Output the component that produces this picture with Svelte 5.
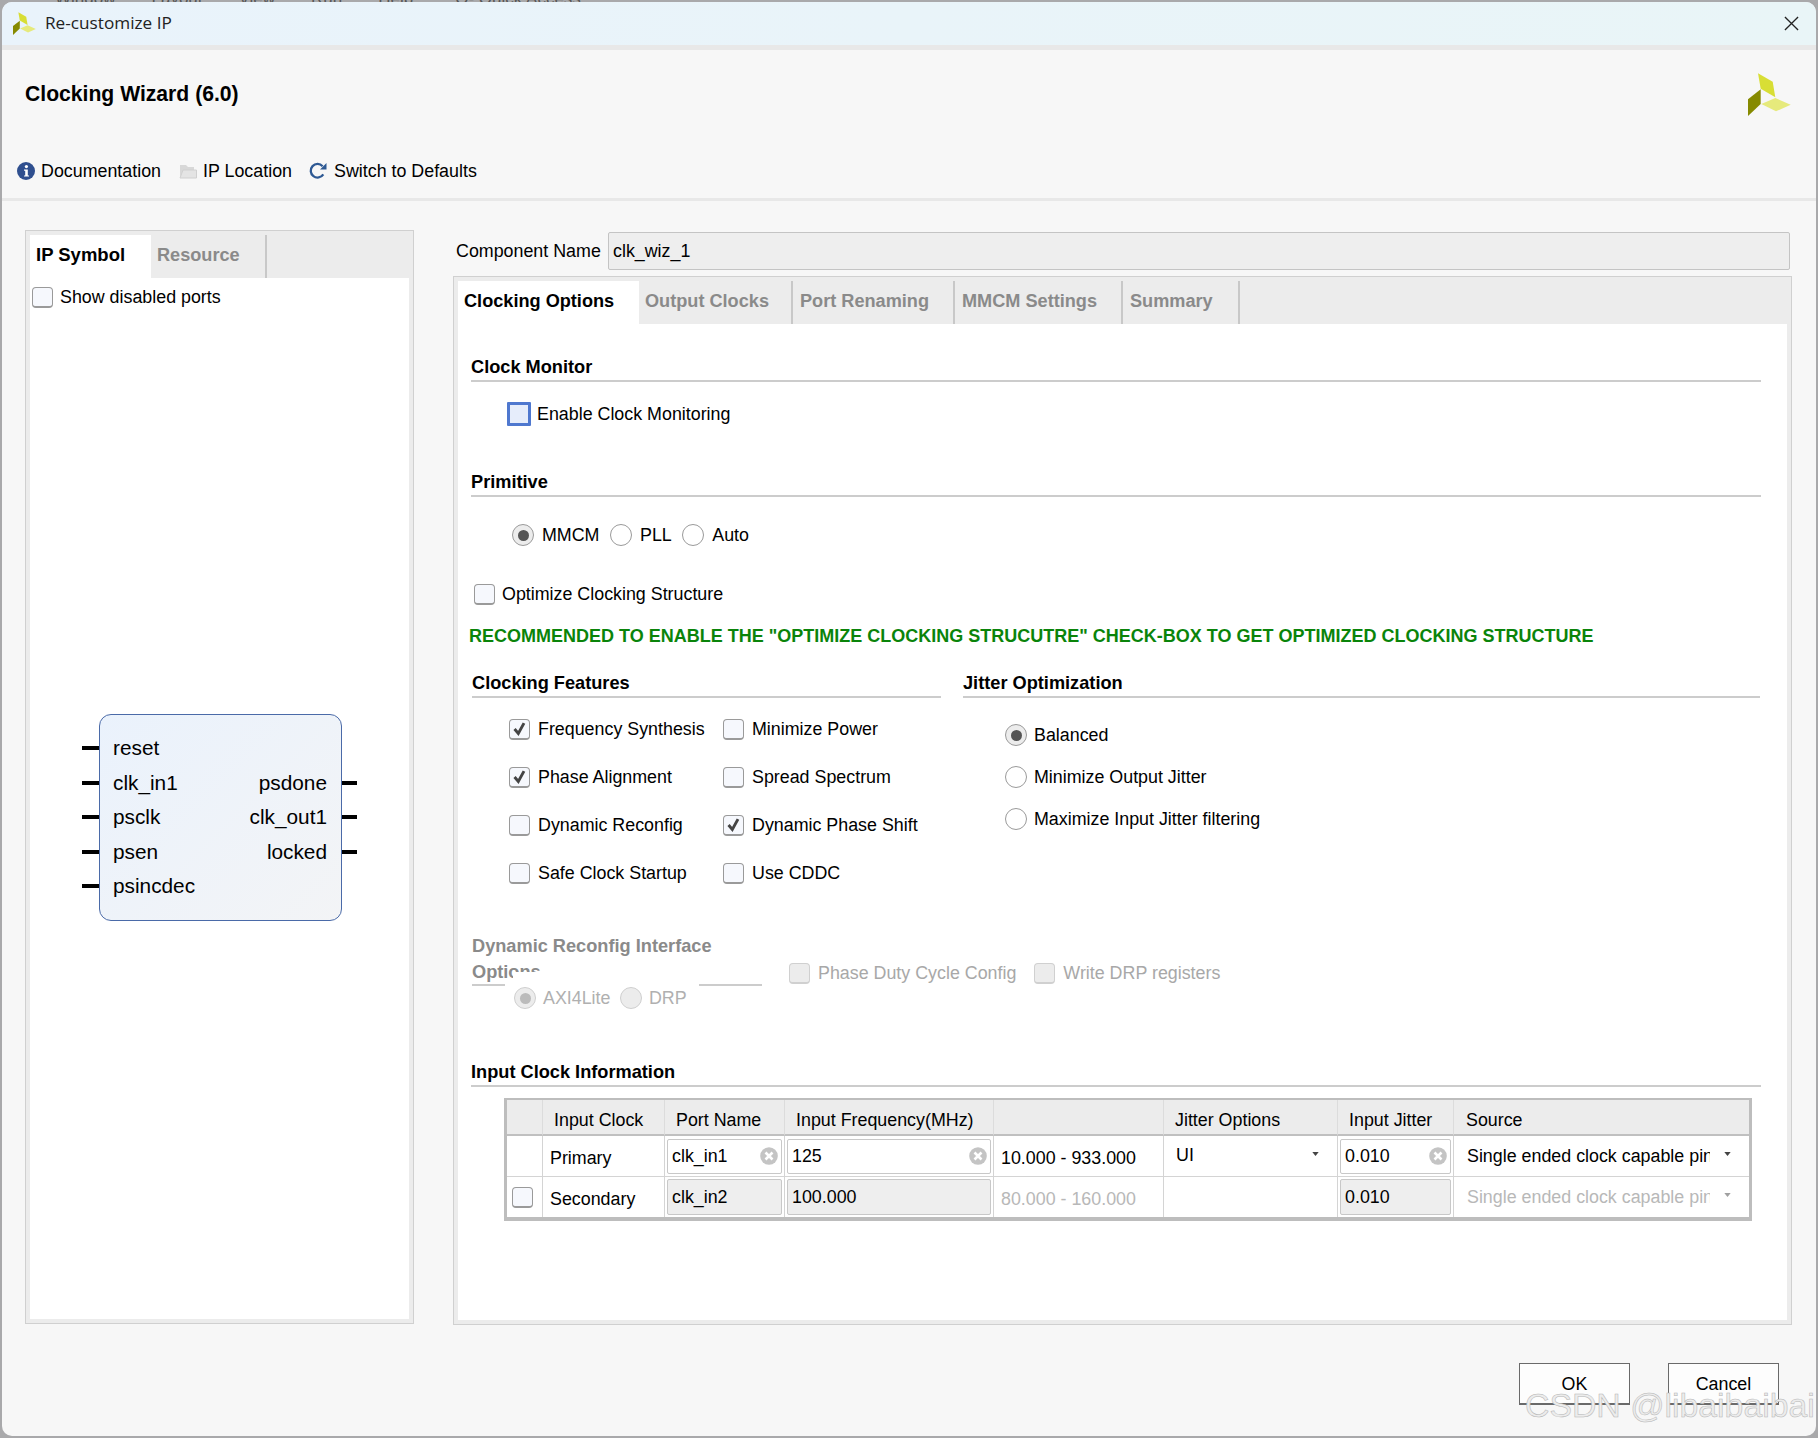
<script>
  const features = [
    ['Frequency Synthesis', true], ['Minimize Power', false],
    ['Phase Alignment', true], ['Spread Spectrum', false],
    ['Dynamic Reconfig', false], ['Dynamic Phase Shift', true],
    ['Safe Clock Startup', false], ['Use CDDC', false]
  ];
  const tabs = ['Output Clocks', 'Port Renaming', 'MMCM Settings', 'Summary'];
  const tabWidths = [154, 162, 168, 117];
  const pinsLeft = ['reset', 'clk_in1', 'psclk', 'psen', 'psincdec'];
  const pinsRight = ['', 'psdone', 'clk_out1', 'locked', ''];
</script>

{#snippet logo(cls)}
  <svg class={cls} viewBox="0 0 43 43">
    <polygon points="10,0.3 24.7,8.7 27.3,24.3 12.7,15.7" fill="#d8de35" />
    <polygon points="27.3,25 42.7,31.7 28,38.3 13.3,31" fill="#e6ea7c" />
    <polygon points="12.7,16.3 12.7,31 0,43 0,26.3" fill="#868a00" />
  </svg>
{/snippet}

{#snippet check(checked, cls = '')}
  <span class="box {cls}">
    {#if checked}
      <svg viewBox="0 0 20 20"><path d="M4.5 10 L8.7 15 L15 3.5" fill="none" stroke="#444" stroke-width="3.2" /></svg>
    {/if}
  </span>
{/snippet}

{#snippet radio(on, cls = '')}
  <span class="radio {on ? 'on' : ''} {cls}"></span>
{/snippet}

{#snippet clear()}
  <svg class="clear" viewBox="0 0 18 18">
    <circle cx="9" cy="9" r="8.8" fill="#c4c4c4" />
    <path d="M5.5 5.5 L12.5 12.5 M12.5 5.5 L5.5 12.5" stroke="#fff" stroke-width="2.6" />
  </svg>
{/snippet}

{#snippet arrow(cls = '')}
  <svg class="arrow {cls}" viewBox="0 0 8 5"><path d="M0 0 H8 L4 5 Z" /></svg>
{/snippet}

<div class="screen">
  <div class="menu-peek">
    <span>Window</span><span>Layout</span><span>View</span><span>Run</span><span>Help</span><span class="qa">Q- Quick Access</span>
  </div>
  <div class="dialog">
    <div class="titlebar">
      {@render logo('logo-small')}
      <span class="title">Re-customize IP</span>
      <svg class="close" viewBox="0 0 16 16"><path d="M1 1 L15 15 M15 1 L1 15" stroke="#222" stroke-width="1.4" fill="none" /></svg>
    </div>
    <div class="strip"></div>

    <div class="header">
      <h1>Clocking Wizard (6.0)</h1>
      {@render logo('logo-big')}
    </div>

    <div class="toolbar">
      <span class="tool">
        <svg class="ic" viewBox="0 0 18 18"><circle cx="9" cy="9" r="9" fill="#2f4f8f" /><circle cx="9.4" cy="4.6" r="1.6" fill="#fff" /><path d="M7 7.6 H10.8 V13.4 H12 V14.6 H7 V13.4 H8.2 V8.8 H7 Z" fill="#fff" /></svg>
        Documentation
      </span>
      <span class="tool t2">
        <svg class="ic" viewBox="0 0 18 18"><path d="M1 3 H7 L9 5 H15 V8 H5 L1 15 Z" fill="#d8d8d8" /><path d="M1 16 L4 8 H17.5 V16 Z" fill="#e4e4e4" stroke="#d0d0d0" /></svg>
        IP Location
      </span>
      <span class="tool t3">
        <svg class="ic" viewBox="0 0 18 18"><path d="M14.3 12.4 A6.8 6.8 0 1 1 13.6 4.2" fill="none" stroke="#2f5a94" stroke-width="2.3" /><path d="M17.5 1 V7.6 H11 Z" fill="#2f5a94" /></svg>
        Switch to Defaults
      </span>
    </div>
    <div class="sep"></div>

    <div class="body">
      <div class="left panel">
        <div class="tabbar">
          <span class="tab active ip">IP Symbol</span>
          <span class="tab res">Resource</span>
        </div>
        <div class="leftbody">
          <label class="showports">{@render check(false)}<span>Show disabled ports</span></label>
          <div class="symbol">
            <div class="pincol">
              {#each pinsLeft as p}
                <div class="pin"><i class="stub l"></i>{p}</div>
              {/each}
            </div>
            <div class="pincol right">
              {#each pinsRight as p}
                <div class="pin">{p}{#if p}<i class="stub r"></i>{/if}</div>
              {/each}
            </div>
          </div>
        </div>
      </div>

      <div class="rightcol">
        <div class="compname">
          <span class="cn-label">Component Name</span>
          <div class="cn-input">clk_wiz_1</div>
        </div>
        <div class="main panel">
          <div class="tabbar">
            <span class="tab active co">Clocking Options</span>
            {#each tabs as t, i}
              <span class="tab gt" style="width:{tabWidths[i]}px">{t}</span>
            {/each}
          </div>
          <div class="content">
            <div class="head">Clock Monitor</div>
            <label class="row enable">{@render check(false, 'focus')}<span>Enable Clock Monitoring</span></label>

            <div class="head primitive">Primitive</div>
            <div class="row prim">
              {@render radio(true)}<span class="pl">MMCM</span>
              {@render radio(false)}<span class="pl">PLL</span>
              {@render radio(false)}<span>Auto</span>
            </div>

            <label class="row optimize">{@render check(false)}<span>Optimize Clocking Structure</span></label>
            <div class="green">RECOMMENDED TO ENABLE THE "OPTIMIZE CLOCKING STRUCUTRE" CHECK-BOX TO GET OPTIMIZED CLOCKING STRUCTURE</div>

            <div class="twocol">
              <div class="cf">
                <div class="head">Clocking Features</div>
                <div class="fgrid">
                  {#each features as f}
                    <label class="fitem">{@render check(f[1])}<span>{f[0]}</span></label>
                  {/each}
                </div>
              </div>
              <div class="jo">
                <div class="head">Jitter Optimization</div>
                <div class="jlist">
                  <div class="jitem">{@render radio(true)}<span>Balanced</span></div>
                  <div class="jitem">{@render radio(false)}<span>Minimize Output Jitter</span></div>
                  <div class="jitem">{@render radio(false)}<span>Maximize Input Jitter filtering</span></div>
                </div>
              </div>
            </div>

            <div class="dyn">
              <div class="head dis dhead">Dynamic Reconfig Interface<br />Options</div>
              <div class="dyn-over">
                {@render radio(true, 'off')}<span class="pl">AXI4Lite</span>
                {@render radio(false, 'off')}<span>DRP</span>
              </div>
              <div class="dopts">
                {@render check(false, 'off')}<span class="pl2">Phase Duty Cycle Config</span>
                {@render check(false, 'off')}<span>Write DRP registers</span>
              </div>
            </div>

            <div class="head ici">Input Clock Information</div>
            <div class="table">
              <div class="cell th"></div>
              <div class="cell th p1">Input Clock</div>
              <div class="cell th">Port Name</div>
              <div class="cell th">Input Frequency(MHz)</div>
              <div class="cell th"></div>
              <div class="cell th">Jitter Options</div>
              <div class="cell th">Input Jitter</div>
              <div class="cell th srch">Source</div>

              <div class="cell"></div>
              <div class="cell name">Primary</div>
              <div class="cell f"><div class="field">clk_in1{@render clear()}</div></div>
              <div class="cell f"><div class="field">125{@render clear()}</div></div>
              <div class="cell range">10.000 - 933.000</div>
              <div class="cell sel">UI{@render arrow()}</div>
              <div class="cell f"><div class="field">0.010{@render clear()}</div></div>
              <div class="cell sel src"><span class="clip">Single ended clock capable pin</span>{@render arrow()}</div>

              <div class="cell last chk">{@render check(false)}</div>
              <div class="cell last name">Secondary</div>
              <div class="cell last f"><div class="field ro">clk_in2</div></div>
              <div class="cell last f"><div class="field ro">100.000</div></div>
              <div class="cell last range dimmed">80.000 - 160.000</div>
              <div class="cell last"></div>
              <div class="cell last f"><div class="field ro">0.010</div></div>
              <div class="cell last sel src dimmed"><span class="clip">Single ended clock capable pin</span>{@render arrow('grey')}</div>
            </div>
          </div>
        </div>
      </div>
    </div>

    <div class="footer">
      <div class="btn">OK</div>
      <div class="btn">Cancel</div>
      <div class="watermark">CSDN @libaibaibai</div>
    </div>
  </div>
</div>

<style>
  :global(body) { margin: 0; background: #a9a9ab; }
  .screen { width: 1818px; height: 1438px; position: relative; overflow: hidden; font-family: "Liberation Sans", Arial, sans-serif; color: #000; font-size: 17.85px; line-height: 24px; background: #a9a9ab; }
  .menu-peek { position: absolute; top: -13px; left: 55px; display: flex; gap: 36px; color: #555; font-size: 17px; }
  .qa { margin-left: 6px; }
  .dialog { position: absolute; inset: 2px; background: #f7f7f7; border-radius: 10px; overflow: hidden; display: flex; flex-direction: column; }

  .titlebar { height: 43px; flex: none; display: flex; align-items: center; background: linear-gradient(90deg, #e9f3fb, #e9f5f7); padding-left: 11px; }
  .logo-small { width: 23px; height: 23px; flex: none; }
  .title { margin: 0 0 2px 9px; font-family: "Open Sans", sans-serif; font-size: 17.2px; color: #222; }
  .close { width: 15px; height: 15px; margin-left: auto; margin-right: 17px; }
  .strip { height: 5px; background: #e8e8e8; flex: none; }

  .header { height: 100px; flex: none; display: flex; justify-content: space-between; padding: 0 25px 0 23px; }
  h1 { margin: 32px 0 0; font-size: 21.15px; font-weight: 700; line-height: 24px; }
  .logo-big { width: 43px; height: 43px; margin-top: 23px; }

  .toolbar { height: 48px; flex: none; display: flex; padding-left: 15px; padding-top: 9px; box-sizing: border-box; }
  .tool { display: flex; align-items: center; gap: 6px; height: 24px; }
  .t2 { margin-left: 18px; }
  .t3 { margin-left: 17px; gap: 7px; }
  .ic { width: 18px; height: 18px; flex: none; }
  .sep { height: 3px; background: #e8e8e8; flex: none; }

  .body { height: 1123px; flex: none; display: flex; padding-left: 23px; }
  .panel { border: 1px solid #d0d0d0; background: #ececec; padding: 4px; box-sizing: border-box; display: flex; flex-direction: column; }
  .left { width: 389px; height: 1094px; margin-top: 29px; flex: none; }
  .tabbar { height: 43px; flex: none; display: flex; background: #ececec; align-items: stretch; }
  .tab { font-weight: 700; font-size: 18.15px; display: flex; align-items: center; padding-bottom: 4px; color: #8a8a8a; box-sizing: border-box; }
  .tab.active { background: #fff; color: #000; }
  .ip { width: 121px; padding-left: 6px; font-size: 18.5px; }
  .res { width: 116px; padding-left: 6px; border-right: 2px solid #c8c8c8; }
  .leftbody { flex: 1; background: #fff; padding-top: 7px; }
  .showports { display: flex; align-items: center; gap: 7px; padding-left: 2px; }

  .box { width: 21px; height: 21px; flex: none; box-sizing: border-box; border: 1.5px solid #9a9a9a; border-bottom-width: 2px; border-radius: 4px; background: #f6f8fd; display: block; }
  .box svg { display: block; width: 100%; height: 100%; }
  .box.focus { width: 24px; height: 24px; border: 3px solid #4f78cf; border-radius: 1px; background: #e6edfb; }
  .box.off { border-color: #d0d0d0; background: #ececec; }
  .radio { width: 22px; height: 22px; flex: none; box-sizing: border-box; border: 1.5px solid #9a9a9a; border-radius: 50%; background: #fff; display: block; position: relative; }
  .radio.on { background: #ececec; }
  .radio.on::after { content: ''; position: absolute; inset: 4.5px; border-radius: 50%; background: #555; }
  .radio.off { border-color: #cfcfcf; background: #ececec; }
  .radio.off.on::after { background: #bbb; }

  .symbol { width: 243px; height: 207px; box-sizing: border-box; margin: 405px 0 0 69px; border: 1px solid #4a6aa8; border-radius: 12px; background: linear-gradient(135deg, #eaf2fc, #f3f4f6); display: flex; justify-content: space-between; padding: 16px 14px 0 13px; font-size: 20.8px; }
  .pincol.right { text-align: right; }
  .pin { height: 34.5px; line-height: 34.5px; position: relative; white-space: nowrap; }
  .stub { position: absolute; height: 4px; top: 15px; background: #000; }
  .stub.l { width: 17px; left: -31px; }
  .stub.r { width: 15px; right: -30px; }

  .rightcol { margin-left: 39px; flex: none; width: 1339px; }
  .compname { margin-top: 30px; height: 39px; display: flex; align-items: center; padding-left: 3px; }
  .cn-label { width: 152px; flex: none; }
  .cn-input { flex: 1; height: 38px; box-sizing: border-box; margin-right: 2px; background: #eee; border: 1px solid #c4c4c4; border-radius: 2px; padding-left: 4px; line-height: 36px; }
  .main { height: 1049px; margin-top: 6px; }
  .co { width: 181px; padding-left: 6px; }
  .gt { padding-left: 6px; border-right: 2px solid #c8c8c8; }
  .gt + .gt { padding-left: 7px; }
  .content { flex: 1; background: #fff; padding: 31px 26px 0 13px; }

  .head { font-weight: 700; height: 27px; box-sizing: border-box; border-bottom: 2px solid #cccccc; font-size: 18.2px; line-height: 24px; white-space: nowrap; }
  .row { display: flex; align-items: center; height: 24px; }
  .enable { margin-top: 20px; padding-left: 36px; gap: 6px; }
  .primitive { margin-top: 44px; }
  .prim { margin-top: 26px; padding-left: 41px; gap: 8px; }
  .pl { margin-right: 2.5px; }
  .optimize { margin-top: 35px; padding-left: 3px; gap: 7px; }
  .green { margin-top: 18px; margin-left: -2px; color: #0a840a; font-weight: 700; font-size: 18px; line-height: 24px; white-space: nowrap; }

  .twocol { display: grid; grid-template-columns: 469px 797px; column-gap: 22px; margin-top: 23px; margin-left: 1px; height: 239px; }
  .fgrid { display: grid; grid-template-columns: 214px 1fr; grid-auto-rows: 48px; margin-top: 7px; padding-left: 37px; }
  .fitem { display: flex; align-items: center; gap: 8px; white-space: nowrap; }
  .jlist { margin-top: 16px; padding-left: 42px; }
  .jitem { height: 42px; display: flex; align-items: center; gap: 7px; }

  .dyn { position: relative; margin-top: 23px; height: 127px; margin-left: 1px; display: flex; align-items: flex-start; }
  .dis { color: #8a8a8a; }
  .dhead { width: 290px; height: 53px; line-height: 26px; flex: none; overflow: hidden; }
  .dyn-over { position: absolute; left: 33px; top: 39px; width: 194px; height: 43px; background: #fff; display: flex; align-items: flex-start; padding: 15px 0 0 9px; gap: 7px; box-sizing: border-box; color: #b0b0b0; line-height: 22px; clip-path: polygon(8px 0, 100% 0, 100% 100%, 0 100%, 0 10px, 8px 10px); }
  .dopts { display: flex; align-items: center; margin: 28px 0 0 27px; gap: 8px; height: 24px; color: #a8a8a8; }
  .pl2 { margin-right: 10px; }

  .table { margin: 11px 0 0 33px; width: 1248px; box-sizing: border-box; border: 3px solid #bdbdbd; border-top-width: 2px; border-bottom-width: 4px; display: grid; grid-template-columns: 36px 122px 120px 209px 170px 174px 116px 1fr; grid-template-rows: 36px 41px 40px; background: #fff; }
  .cell { box-sizing: border-box; border-right: 1px solid #d4d4d4; border-bottom: 1px solid #d4d4d4; display: flex; align-items: center; padding: 4px 0 0 7px; position: relative; min-width: 0; white-space: nowrap; }
  .cell:nth-child(8n) { border-right: 0; }
  .th { background: #ececec; border-bottom: 2px solid #c0c0c0; padding: 5px 0 0 11px; border-right-color: #dcdcdc; }
  .srch { padding-left: 12px; }
  .cell.last { border-bottom: 0; }
  .f { padding: 2px; }
  .field { flex: 1; height: 35px; box-sizing: border-box; background: #fff; border: 1px solid #c8c8c8; border-radius: 2px; padding-left: 4px; display: flex; align-items: center; position: relative; }
  .field.ro { background: #eee; height: 36px; padding-bottom: 0; }
  .clear { width: 18px; height: 18px; position: absolute; right: 3px; top: 7px; }
  .dimmed { color: #b8b8b8; }
  .sel { padding: 0 0 2px 12px; }
  .src { padding: 0 0 0 13px; }
  .clip { width: 243px; overflow: hidden; display: block; }
  .arrow { width: 7px; height: 4px; position: absolute; right: 18px; top: 16px; fill: #444; }
  .arrow.grey { fill: #a0a0a0; }
  .chk { padding: 0 0 0 5px; }

  .footer { position: relative; flex: 1; display: flex; justify-content: flex-end; gap: 38px; padding: 39px 37px 0 0; }
  .btn { width: 111px; height: 42px; box-sizing: border-box; border: 1.5px solid #6a6a6a; border-bottom-width: 2px; background: #fdfdfd; display: flex; align-items: center; justify-content: center; }
  .watermark { position: absolute; left: 1523px; top: 61px; font-size: 33.8px; line-height: 40px; color: #ececec; -webkit-text-stroke: 0.5px #b4b4b4; white-space: nowrap; }
</style>
